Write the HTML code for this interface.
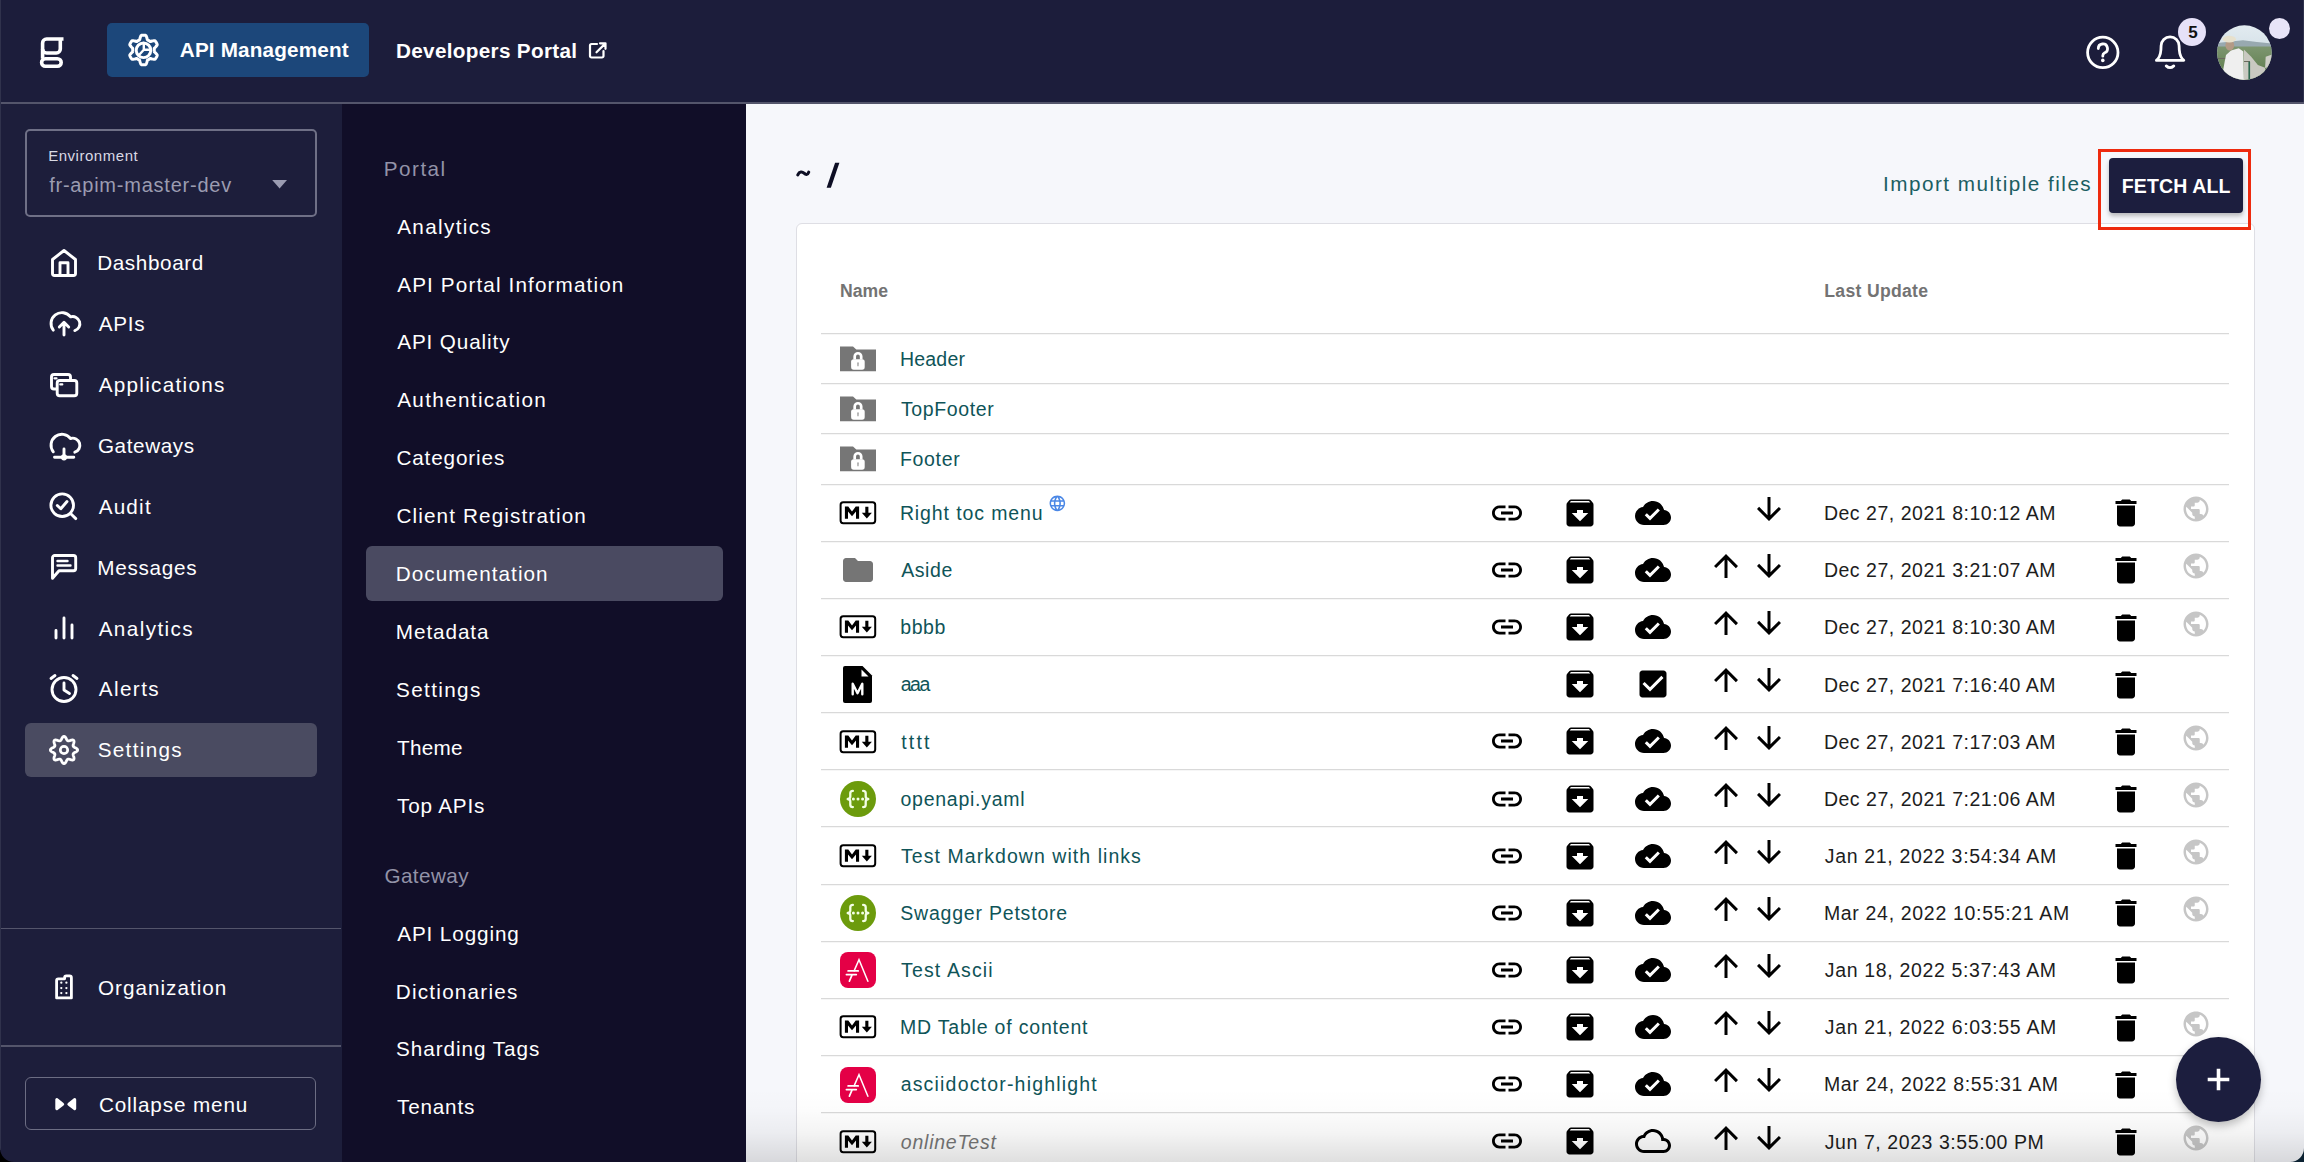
<!DOCTYPE html><html><head><meta charset='utf-8'><style>
html,body{margin:0;padding:0;}
body{width:2304px;height:1162px;overflow:hidden;position:relative;background:#f6f7fb;font-family:"Liberation Sans",sans-serif;}
.t{position:absolute;line-height:1;white-space:pre;font-family:"Liberation Sans",sans-serif;}
.a{position:absolute;}
svg{position:absolute;overflow:visible;}
</style></head><body>
<div class=a style="left:0;top:0;width:2304px;height:102px;background:#1c1d3b"></div>
<div class=a style="left:0;top:102px;width:2304px;height:2px;background:#54556b"></div>
<svg style="left:0;top:0" width="100" height="100" viewBox="0 0 100 100" fill="none" stroke="#fff" stroke-width="3.6" stroke-linejoin="round">
<path d="M63.5 39 H46.6 a4 4 0 0 0 -4 4 V49 a4 4 0 0 0 4 4 H56.3 a4 4 0 0 0 4 -4 V39"/>
<path d="M42.6 49 V58.7"/>
<rect x="41.6" y="58.7" width="19.6" height="7.6" rx="3.8"/>
</svg>
<div class=a style="left:107px;top:23px;width:262px;height:54px;background:#1c477a;border-radius:5px"></div>
<svg style="left:0;top:0" width="200" height="100" viewBox="0 0 200 100" fill="none" stroke="#fff" stroke-width="3" stroke-linejoin="round" stroke-linecap="round">
<path d="M143.50 35.20 L144.02 35.21 L144.53 35.24 L145.05 35.28 L145.56 35.34 L146.02 35.72 L146.38 36.45 L146.68 37.24 L146.93 38.04 L147.13 38.83 L147.30 39.57 L147.55 39.99 L147.89 40.13 L148.23 40.29 L148.57 40.46 L148.90 40.65 L149.22 40.84 L149.54 41.05 L149.85 41.26 L150.15 41.49 L150.63 41.50 L151.36 41.27 L152.14 41.05 L152.96 40.86 L153.79 40.73 L154.61 40.68 L155.16 40.89 L155.47 41.30 L155.77 41.72 L156.05 42.16 L156.32 42.60 L156.57 43.05 L156.80 43.51 L157.02 43.98 L157.22 44.46 L157.13 45.04 L156.67 45.72 L156.15 46.37 L155.57 46.99 L154.99 47.56 L154.43 48.07 L154.19 48.50 L154.24 48.87 L154.27 49.25 L154.29 49.62 L154.30 50.00 L154.29 50.38 L154.27 50.75 L154.24 51.13 L154.19 51.50 L154.43 51.93 L154.99 52.44 L155.57 53.01 L156.15 53.63 L156.67 54.28 L157.13 54.96 L157.22 55.54 L157.02 56.02 L156.80 56.49 L156.57 56.95 L156.32 57.40 L156.05 57.84 L155.77 58.28 L155.47 58.70 L155.16 59.11 L154.61 59.32 L153.79 59.27 L152.96 59.14 L152.14 58.95 L151.36 58.73 L150.63 58.50 L150.15 58.51 L149.85 58.74 L149.54 58.95 L149.22 59.16 L148.90 59.35 L148.57 59.54 L148.23 59.71 L147.89 59.87 L147.55 60.01 L147.30 60.43 L147.13 61.17 L146.93 61.96 L146.68 62.76 L146.38 63.55 L146.02 64.28 L145.56 64.66 L145.05 64.72 L144.53 64.76 L144.02 64.79 L143.50 64.80 L142.98 64.79 L142.47 64.76 L141.95 64.72 L141.44 64.66 L140.98 64.28 L140.62 63.55 L140.32 62.76 L140.07 61.96 L139.87 61.17 L139.70 60.43 L139.45 60.01 L139.11 59.87 L138.77 59.71 L138.43 59.54 L138.10 59.35 L137.78 59.16 L137.46 58.95 L137.15 58.74 L136.85 58.51 L136.37 58.50 L135.64 58.73 L134.86 58.95 L134.04 59.14 L133.21 59.27 L132.39 59.32 L131.84 59.11 L131.53 58.70 L131.23 58.28 L130.95 57.84 L130.68 57.40 L130.43 56.95 L130.20 56.49 L129.98 56.02 L129.78 55.54 L129.87 54.96 L130.33 54.28 L130.85 53.63 L131.43 53.01 L132.01 52.44 L132.57 51.93 L132.81 51.50 L132.76 51.13 L132.73 50.75 L132.71 50.38 L132.70 50.00 L132.71 49.62 L132.73 49.25 L132.76 48.87 L132.81 48.50 L132.57 48.07 L132.01 47.56 L131.43 46.99 L130.85 46.37 L130.33 45.72 L129.87 45.04 L129.78 44.46 L129.98 43.98 L130.20 43.51 L130.43 43.05 L130.68 42.60 L130.95 42.16 L131.23 41.72 L131.53 41.30 L131.84 40.89 L132.39 40.68 L133.21 40.73 L134.04 40.86 L134.86 41.05 L135.64 41.27 L136.37 41.50 L136.85 41.49 L137.15 41.26 L137.46 41.05 L137.78 40.84 L138.10 40.65 L138.43 40.46 L138.77 40.29 L139.11 40.13 L139.45 39.99 L139.70 39.57 L139.87 38.83 L140.07 38.04 L140.32 37.24 L140.62 36.45 L140.98 35.72 L141.44 35.34 L141.95 35.28 L142.47 35.24 L142.98 35.21Z"/>
<circle cx="143.5" cy="50.3" r="7.3" stroke-width="2.9"/>
<path d="M143.8 43 V49.8 H150.6 M143.8 49.8 L139 55" stroke-width="2.4"/>
</svg>
<svg style="left:0;top:0" width="700" height="100" viewBox="0 0 700 100" fill="none" stroke="#fff" stroke-width="2.2" stroke-linecap="round" stroke-linejoin="round">
<path d="M597 44 H591.5 a1.5 1.5 0 0 0 -1.5 1.5 V56 a1.5 1.5 0 0 0 1.5 1.5 H602 a1.5 1.5 0 0 0 1.5 -1.5 V51"/>
<path d="M600 43.3 H605.5 V48.8 M605.2 43.6 L596.5 52.3"/>
</svg>
<svg style="left:2080px;top:30px" width="46" height="46" viewBox="0 0 46 46" fill="none" stroke="#fff" stroke-width="2.8" stroke-linecap="round">
<circle cx="22.8" cy="22.4" r="15.2"/>
<path d="M18.3 18.6 a4.6 4.6 0 1 1 6.4 4.2 c-1.2 0.6 -1.9 1.4 -1.9 2.8 v0.6"/>
<circle cx="22.8" cy="30.4" r="1.8" fill="#fff" stroke="none"/>
</svg>
<svg style="left:2150px;top:30px" width="40" height="46" viewBox="0 0 40 46" fill="none" stroke="#fff" stroke-width="2.8" stroke-linejoin="round" stroke-linecap="round">
<path d="M6.4 30.4 C9.6 27.6 10.6 24 10.9 20 L11.1 15.8 A9 9 0 0 1 29.1 15.8 L29.3 20 C29.6 24 30.6 27.6 33.8 30.4 Z"/>
<path d="M16.2 35.9 Q20 39.4 23.8 35.9"/>
</svg>
<div class=a style="left:2178px;top:17.7px;width:28.4px;height:28.4px;border-radius:50%;background:#e6e1f8"></div>
<svg style="left:2217px;top:24.7px" width="55" height="55" viewBox="0 0 55 55">
<defs><clipPath id="av"><circle cx="27.4" cy="27.6" r="27.3"/></clipPath>
<linearGradient id="sky" x1="0" y1="0" x2="0" y2="1"><stop offset="0" stop-color="#e2ebf0"/><stop offset="1" stop-color="#c6d6df"/></linearGradient>
<linearGradient id="frs" x1="0" y1="0" x2="0" y2="1"><stop offset="0" stop-color="#7d9670"/><stop offset="1" stop-color="#587846"/></linearGradient></defs>
<g clip-path="url(#av)">
<rect width="55" height="55" fill="url(#sky)"/>
<path d="M0 18 L14 16.5 L26 15.2 L40 17 L55 18.5 V23 H0 Z" fill="#98a9b0"/>
<rect x="0" y="21.5" width="55" height="34" fill="url(#frs)"/>
<path d="M26.9 24.4 L34.2 31.7 L40.9 40.1 L48.1 42.8 L48.1 48.4 L37.5 54.6 L26.9 55 Z" fill="#c9c9c1"/>
<path d="M48.7 31.7 L55 29.5 V41 L48.1 43 Z" fill="#cfcfc8"/>
<path d="M1 33.5 H13 M27 36.5 H33" stroke="#6b6a5e" stroke-width="1"/>
<rect x="31.4" y="36.7" width="1.7" height="19" fill="#2d6a50"/>
<path d="M9 30 L14 25.5 L21.8 23.3 L26.3 26.6 L26.9 55 L8.4 55 L6.2 44.5 Z" fill="#efefef"/>
<ellipse cx="12.8" cy="20.2" rx="4.4" ry="5.2" fill="#b39a86"/>
<ellipse cx="12.3" cy="14.2" rx="6.6" ry="3.4" fill="#e7e1cd"/>
</g></svg>
<div class=a style="left:2268.8px;top:18.1px;width:21.4px;height:21.4px;border-radius:50%;background:#e8e4f8"></div>
<div class=a style="left:0;top:104px;width:342px;height:1058px;background:#1d1e3b"></div>
<div class=a style="left:342px;top:104px;width:404px;height:1058px;background:#110e28"></div>
<div class=a style="left:24.5px;top:128.5px;width:288px;height:84px;border:2px solid #6f7086;border-radius:5px"></div>
<svg style="left:0;top:0" width="300" height="200" viewBox="0 0 300 200"><path d="M272.2 180 H287 L279.6 188.4 Z" fill="#9b9cb1"/></svg>
<div class=a style="left:24.5px;top:722.5px;width:292px;height:54.5px;background:#4a4b61;border-radius:6px"></div>
<svg style="left:0;top:0" width="100" height="800" viewBox="0 0 100 800" fill="none" stroke="#fff" stroke-width="2.9" stroke-linecap="round" stroke-linejoin="round">
<!-- home 51-77, 249-277 -->
<path d="M52.5 259.5 L64 250.5 L75.5 259.5 V273.5 a2 2 0 0 1 -2 2 H54.5 a2 2 0 0 1 -2 -2 Z"/>
<path d="M60 275.5 V262.8 H68 V275.5"/>
<!-- cloud upload 48.8-79.2, 310.5-336.3 -->
<path d="M53.3 330.2 A10.6 10.6 0 1 1 70.6 316.9 A6.1 6.1 0 0 1 74.8 330.6"/>
<path d="M64 335 V322.5 M59.3 327 L64 322.3 L68.7 327"/>
<!-- applications 50-78.3, 373-397.2 -->
<path d="M56 389 H54 a2.5 2.5 0 0 1 -2.5 -2.5 V377 a2.5 2.5 0 0 1 2.5 -2.5 H68 a2.5 2.5 0 0 1 2.5 2.5 V380"/>
<rect x="57.2" y="380.5" width="19.6" height="15.2" rx="2.5"/>
<path d="M54.5 378.3 H56.5 M60.3 384.4 H62.3" stroke-width="2.2"/>
<!-- gateways 48.8-79, 432.3-460.8 -->
<path d="M53.3 451.8 A10.6 10.6 0 1 1 70.6 438.5 A6.1 6.1 0 0 1 74.8 452.2"/>
<path d="M64 449 V456 M54.5 457.3 H73.8"/>
<circle cx="64" cy="457.3" r="3.1" fill="#fff" stroke="none"/>
<!-- audit 49.8-77.6 492.2-520 -->
<circle cx="62.2" cy="505.2" r="11.3"/>
<path d="M70.5 513.5 L75.8 518.6"/>
<path d="M57.3 505.5 L60.8 508.8 L67 501.5"/>
<!-- messages 51-77.2, 553.9-579.8 -->
<path d="M55 555.5 H73.5 a2.2 2.2 0 0 1 2.2 2.2 V568.5 a2.2 2.2 0 0 1 -2.2 2.2 H59 L52.5 578.3 V557.7 a2.2 2.2 0 0 1 2.5 -2.2 Z"/>
<path d="M57.5 561 H67.5 M57.5 565.5 H70.5" stroke-width="2.4"/>
<!-- analytics 54.4-73.4 616.5-639.6 -->
<path d="M56 638 V630.5 M64 638 V618 M72 638 V625"/>
<!-- alerts 49.2-78.8 674.3-702.9 -->
<circle cx="64" cy="689.5" r="12"/>
<path d="M64 683 V690 L69.5 693.5"/>
<path d="M51 678.5 L55 675.5 M77 678.5 L73 675.5"/>
</svg>
<svg style="left:0;top:0" width="100" height="800" viewBox="0 0 100 800" fill="none" stroke="#fff" stroke-width="2.9" stroke-linecap="round" stroke-linejoin="round">
<path d="M64.00 736.40 L64.35 736.45 L64.70 736.60 L65.03 736.85 L65.35 737.17 L65.64 737.56 L65.90 737.99 L66.14 738.43 L66.36 738.88 L66.57 739.30 L66.76 739.68 L66.96 740.01 L67.16 740.29 L67.37 740.50 L67.59 740.65 L67.83 740.76 L68.07 740.85 L68.34 740.90 L68.64 740.90 L68.97 740.85 L69.34 740.75 L69.75 740.62 L70.19 740.46 L70.66 740.30 L71.15 740.16 L71.64 740.04 L72.12 739.98 L72.57 739.97 L72.98 740.03 L73.33 740.17 L73.62 740.38 L73.83 740.67 L73.97 741.02 L74.03 741.43 L74.02 741.88 L73.96 742.36 L73.84 742.85 L73.70 743.34 L73.54 743.81 L73.38 744.25 L73.25 744.66 L73.15 745.03 L73.10 745.36 L73.10 745.66 L73.15 745.93 L73.24 746.17 L73.35 746.41 L73.50 746.63 L73.71 746.84 L73.99 747.04 L74.32 747.24 L74.70 747.43 L75.12 747.64 L75.57 747.86 L76.01 748.10 L76.44 748.36 L76.83 748.65 L77.15 748.97 L77.40 749.30 L77.55 749.65 L77.60 750.00 L77.55 750.35 L77.40 750.70 L77.15 751.03 L76.83 751.35 L76.44 751.64 L76.01 751.90 L75.57 752.14 L75.12 752.36 L74.70 752.57 L74.32 752.76 L73.99 752.96 L73.71 753.16 L73.50 753.37 L73.35 753.59 L73.24 753.83 L73.15 754.07 L73.10 754.34 L73.10 754.64 L73.15 754.97 L73.25 755.34 L73.38 755.75 L73.54 756.19 L73.70 756.66 L73.84 757.15 L73.96 757.64 L74.02 758.12 L74.03 758.57 L73.97 758.98 L73.83 759.33 L73.62 759.62 L73.33 759.83 L72.98 759.97 L72.57 760.03 L72.12 760.02 L71.64 759.96 L71.15 759.84 L70.66 759.70 L70.19 759.54 L69.75 759.38 L69.34 759.25 L68.97 759.15 L68.64 759.10 L68.34 759.10 L68.07 759.15 L67.83 759.24 L67.59 759.35 L67.37 759.50 L67.16 759.71 L66.96 759.99 L66.76 760.32 L66.57 760.70 L66.36 761.12 L66.14 761.57 L65.90 762.01 L65.64 762.44 L65.35 762.83 L65.03 763.15 L64.70 763.40 L64.35 763.55 L64.00 763.60 L63.65 763.55 L63.30 763.40 L62.97 763.15 L62.65 762.83 L62.36 762.44 L62.10 762.01 L61.86 761.57 L61.64 761.12 L61.43 760.70 L61.24 760.32 L61.04 759.99 L60.84 759.71 L60.63 759.50 L60.41 759.35 L60.17 759.24 L59.93 759.15 L59.66 759.10 L59.36 759.10 L59.03 759.15 L58.66 759.25 L58.25 759.38 L57.81 759.54 L57.34 759.70 L56.85 759.84 L56.36 759.96 L55.88 760.02 L55.43 760.03 L55.02 759.97 L54.67 759.83 L54.38 759.62 L54.17 759.33 L54.03 758.98 L53.97 758.57 L53.98 758.12 L54.04 757.64 L54.16 757.15 L54.30 756.66 L54.46 756.19 L54.62 755.75 L54.75 755.34 L54.85 754.97 L54.90 754.64 L54.90 754.34 L54.85 754.07 L54.76 753.83 L54.65 753.59 L54.50 753.37 L54.29 753.16 L54.01 752.96 L53.68 752.76 L53.30 752.57 L52.88 752.36 L52.43 752.14 L51.99 751.90 L51.56 751.64 L51.17 751.35 L50.85 751.03 L50.60 750.70 L50.45 750.35 L50.40 750.00 L50.45 749.65 L50.60 749.30 L50.85 748.97 L51.17 748.65 L51.56 748.36 L51.99 748.10 L52.43 747.86 L52.88 747.64 L53.30 747.43 L53.68 747.24 L54.01 747.04 L54.29 746.84 L54.50 746.63 L54.65 746.41 L54.76 746.17 L54.85 745.93 L54.90 745.66 L54.90 745.36 L54.85 745.03 L54.75 744.66 L54.62 744.25 L54.46 743.81 L54.30 743.34 L54.16 742.85 L54.04 742.36 L53.98 741.88 L53.97 741.43 L54.03 741.02 L54.17 740.67 L54.38 740.38 L54.67 740.17 L55.02 740.03 L55.43 739.97 L55.88 739.98 L56.36 740.04 L56.85 740.16 L57.34 740.30 L57.81 740.46 L58.25 740.62 L58.66 740.75 L59.03 740.85 L59.36 740.90 L59.66 740.90 L59.93 740.85 L60.17 740.76 L60.41 740.65 L60.63 740.50 L60.84 740.29 L61.04 740.01 L61.24 739.68 L61.43 739.30 L61.64 738.88 L61.86 738.43 L62.10 737.99 L62.36 737.56 L62.65 737.17 L62.97 736.85 L63.30 736.60 L63.65 736.45Z" stroke-width="2.8"/>
<circle cx="64" cy="750" r="3.7" stroke-width="2.7"/>
</svg>
<div class=a style="left:0;top:927.5px;width:341px;height:1.5px;background:#54556b"></div>
<div class=a style="left:0;top:1045px;width:341px;height:1.5px;background:#54556b"></div>
<svg style="left:0;top:900px" width="100" height="260" viewBox="0 900 100 260" fill="none" stroke="#fff" stroke-width="2.8" stroke-linejoin="round">
<path d="M56.6 997.9 V980.6 a1.8 1.8 0 0 1 1.8 -1.8 H64.6 V977.7 a1.8 1.8 0 0 1 1.8 -1.8 H69.6 a1.8 1.8 0 0 1 1.8 1.8 V997.9 Z"/>
<g fill="#fff" stroke="none"><circle cx="61.3" cy="982.7" r="1.15"/><circle cx="66.4" cy="982.7" r="1.15"/><circle cx="61.3" cy="988.1" r="1.15"/><circle cx="66.4" cy="988.1" r="1.15"/><circle cx="61.3" cy="993.1" r="1.15"/><circle cx="66.4" cy="993.1" r="1.15"/></g>
</svg>
<div class=a style="left:24.5px;top:1077px;width:289px;height:51px;border:1.8px solid #6c6d83;border-radius:6px"></div>
<svg style="left:0;top:1090px" width="100" height="30" viewBox="0 1090 100 30"><path d="M55.3 1099.5 a1.5 1.5 0 0 1 2.3 -1.2 L63.5 1103 a1.5 1.5 0 0 1 0 2.4 L57.6 1110 a1.5 1.5 0 0 1 -2.3 -1.2 Z M76.2 1099.5 a1.5 1.5 0 0 0 -2.3 -1.2 L68 1103 a1.5 1.5 0 0 0 0 2.4 L73.9 1110 a1.5 1.5 0 0 0 2.3 -1.2 Z" fill="#fff"/></svg>
<div class=a style="left:365.5px;top:546px;width:357px;height:55px;background:#4a4a61;border-radius:6px"></div>
<svg style="left:780px;top:150px" width="80" height="50" viewBox="780 150 80 50"><path d="M826.6 187.8 H830.9 L839.4 162.8 H835.1 Z" fill="#0d0e24"/><path d="M797.8 174.8 C799.5 171.2 802.3 171.6 804 173.2 C805.7 174.8 807.6 175.2 808.7 172.2" fill="none" stroke="#0d0e24" stroke-width="3.1" stroke-linecap="round"/></svg>
<div class=a style="left:2109px;top:158px;width:134px;height:55px;background:#1c1e3e;border-radius:4px;box-shadow:0 3px 4px rgba(0,0,0,0.25)"></div>
<div class=a style="left:796px;top:223px;width:1457px;height:1000px;background:#fff;border:1.5px solid #dedee4;border-radius:6px"></div>
<div class=a style="left:821px;top:333px;width:1408px;height:1px;background:#d9d9d9;box-shadow:0 1px 0 rgba(0,0,0,0.035)"></div>
<div class=a style="left:821px;top:383px;width:1408px;height:1px;background:#d9d9d9;box-shadow:0 1px 0 rgba(0,0,0,0.035)"></div>
<div class=a style="left:821px;top:433px;width:1408px;height:1px;background:#d9d9d9;box-shadow:0 1px 0 rgba(0,0,0,0.035)"></div>
<div class=a style="left:821px;top:484px;width:1408px;height:1px;background:#d9d9d9;box-shadow:0 1px 0 rgba(0,0,0,0.035)"></div>
<div class=a style="left:821px;top:541px;width:1408px;height:1px;background:#d9d9d9;box-shadow:0 1px 0 rgba(0,0,0,0.035)"></div>
<div class=a style="left:821px;top:598px;width:1408px;height:1px;background:#d9d9d9;box-shadow:0 1px 0 rgba(0,0,0,0.035)"></div>
<div class=a style="left:821px;top:655px;width:1408px;height:1px;background:#d9d9d9;box-shadow:0 1px 0 rgba(0,0,0,0.035)"></div>
<div class=a style="left:821px;top:712px;width:1408px;height:1px;background:#d9d9d9;box-shadow:0 1px 0 rgba(0,0,0,0.035)"></div>
<div class=a style="left:821px;top:769px;width:1408px;height:1px;background:#d9d9d9;box-shadow:0 1px 0 rgba(0,0,0,0.035)"></div>
<div class=a style="left:821px;top:826px;width:1408px;height:1px;background:#d9d9d9;box-shadow:0 1px 0 rgba(0,0,0,0.035)"></div>
<div class=a style="left:821px;top:884px;width:1408px;height:1px;background:#d9d9d9;box-shadow:0 1px 0 rgba(0,0,0,0.035)"></div>
<div class=a style="left:821px;top:941px;width:1408px;height:1px;background:#d9d9d9;box-shadow:0 1px 0 rgba(0,0,0,0.035)"></div>
<div class=a style="left:821px;top:998px;width:1408px;height:1px;background:#d9d9d9;box-shadow:0 1px 0 rgba(0,0,0,0.035)"></div>
<div class=a style="left:821px;top:1055px;width:1408px;height:1px;background:#d9d9d9;box-shadow:0 1px 0 rgba(0,0,0,0.035)"></div>
<div class=a style="left:821px;top:1112px;width:1408px;height:1px;background:#d9d9d9;box-shadow:0 1px 0 rgba(0,0,0,0.035)"></div>
<svg style="left:839.90px;top:345.60px" width="36" height="26" viewBox="0 0 36 26">
<path d="M0 0.5 H13 L16.3 3.5 H36 V25.2 H0 Z" fill="#767676"/>
<path d="M14.7 13.5 V10.5 a3.25 3.25 0 0 1 6.5 0 V13.5" fill="none" stroke="#fff" stroke-width="2.7"/>
<rect x="11.1" y="13.2" width="13.6" height="10.5" rx="2.6" fill="#fff"/>
<path d="M17.4 16.6 H18.6 L18.4 20.3 H17.6 Z" fill="#767676"/>
</svg>
<svg style="left:839.90px;top:395.70px" width="36" height="26" viewBox="0 0 36 26">
<path d="M0 0.5 H13 L16.3 3.5 H36 V25.2 H0 Z" fill="#767676"/>
<path d="M14.7 13.5 V10.5 a3.25 3.25 0 0 1 6.5 0 V13.5" fill="none" stroke="#fff" stroke-width="2.7"/>
<rect x="11.1" y="13.2" width="13.6" height="10.5" rx="2.6" fill="#fff"/>
<path d="M17.4 16.6 H18.6 L18.4 20.3 H17.6 Z" fill="#767676"/>
</svg>
<svg style="left:839.90px;top:445.90px" width="36" height="26" viewBox="0 0 36 26">
<path d="M0 0.5 H13 L16.3 3.5 H36 V25.2 H0 Z" fill="#767676"/>
<path d="M14.7 13.5 V10.5 a3.25 3.25 0 0 1 6.5 0 V13.5" fill="none" stroke="#fff" stroke-width="2.7"/>
<rect x="11.1" y="13.2" width="13.6" height="10.5" rx="2.6" fill="#fff"/>
<path d="M17.4 16.6 H18.6 L18.4 20.3 H17.6 Z" fill="#767676"/>
</svg>
<svg style="left:840.00px;top:501.05px" width="36" height="23" viewBox="0 0 36 23">
<rect x="0.6" y="1.15" width="34.6" height="21" rx="2.6" fill="none" stroke="#000" stroke-width="2"/>
<path d="M4.9 17.7 V5.6 H8.3 L12 10.6 L15.7 5.6 H19.1 V17.7 H16 V10.4 L12 15.3 L8 10.4 V17.7 Z" fill="#000"/>
<path d="M25.3 5.7 H28.4 V11.8 H31.9 L26.85 17.6 L21.8 11.8 H25.3 Z" fill="#000"/>
</svg>
<svg style="left:1048.24px;top:493.64px" width="18.72" height="18.72" viewBox="0 0 24 24"><path d="M11.99 2C6.47 2 2 6.48 2 12s4.47 10 9.99 10C17.52 22 22 17.52 22 12S17.52 2 11.99 2zm6.93 6h-2.95c-.32-1.25-.78-2.45-1.38-3.56 1.84.63 3.37 1.91 4.33 3.56zM12 4.04c.83 1.2 1.48 2.53 1.91 3.96h-3.82c.43-1.43 1.08-2.76 1.91-3.96zM4.26 14C4.1 13.36 4 12.69 4 12s.1-1.36.26-2h3.38c-.08.66-.14 1.32-.14 2 0 .68.06 1.34.14 2H4.26zm.82 2h2.95c.32 1.25.78 2.45 1.38 3.56-1.84-.63-3.37-1.9-4.33-3.56zm2.95-8H5.08c.96-1.66 2.49-2.93 4.33-3.56C8.81 5.55 8.35 6.75 8.03 8zM12 19.96c-.83-1.2-1.48-2.53-1.91-3.96h3.82c-.43 1.43-1.08 2.76-1.91 3.96zM14.34 14H9.66c-.09-.66-.16-1.32-.16-2 0-.68.07-1.35.16-2h4.68c.09.65.16 1.32.16 2 0 .68-.07 1.34-.16 2zm.25 5.56c.6-1.11 1.06-2.31 1.38-3.56h2.95c-.96 1.65-2.49 2.93-4.33 3.56zM16.36 14c.08-.66.14-1.32.14-2 0-.68-.06-1.34-.14-2h3.38c.16.64.26 1.31.26 2s-.1 1.36-.26 2h-3.38z" fill="#4a87e6"/></svg>
<svg style="left:1489.00px;top:494.90px" width="36.00" height="36.00" viewBox="0 0 24 24"><path d="M3.9 12c0-1.71 1.39-3.1 3.1-3.1h4V7H7c-2.76 0-5 2.24-5 5s2.24 5 5 5h4v-1.9H7c-1.71 0-3.1-1.39-3.1-3.1zM8 13h8v-2H8v2zm9-6h-4v1.9h4c1.71 0 3.1 1.39 3.1 3.1s-1.39 3.1-3.1 3.1h-4V17h4c2.76 0 5-2.24 5-5s-2.24-5-5-5z" fill="#000"/></svg>
<svg style="left:1562.00px;top:494.90px" width="36.00" height="36.00" viewBox="0 0 24 24"><path d="M20.54 5.23l-1.39-1.68C18.88 3.21 18.47 3 18 3H6c-.47 0-.88.21-1.16.55L3.46 5.23C3.17 5.57 3 6.02 3 6.5V19c0 1.1.9 2 2 2h14c1.1 0 2-.9 2-2V6.5c0-.48-.17-.93-.46-1.27zM12 17.5L6.5 12H10v-2h4v2h3.5L12 17.5zM5.12 5l.81-1h12l.94 1H5.12z" fill="#000"/></svg>
<svg style="left:1635.30px;top:494.90px" width="36.00" height="36.00" viewBox="0 0 24 24"><path d="M19.35 10.04C18.67 6.59 15.64 4 12 4 9.11 4 6.6 5.64 5.35 8.04 2.34 8.36 0 10.91 0 14c0 3.31 2.69 6 6 6h13c2.76 0 5-2.24 5-5 0-2.64-2.05-4.78-4.65-4.96zM10 17l-3.5-3.5 1.41-1.41L10 14.17 15.18 9l1.41 1.41L10 17z" fill="#000"/></svg>
<svg style="left:1751.30px;top:491.00px" width="36.00" height="36.00" viewBox="0 0 24 24"><path d="M20 12l-1.41-1.41L13 16.17V4h-2v12.17l-5.58-5.59L4 12l8 8 8-8z" fill="#000"/></svg>
<svg style="left:2107.80px;top:495.30px" width="36.00" height="36.00" viewBox="0 0 24 24"><path d="M6 19c0 1.1.9 2 2 2h8c1.1 0 2-.9 2-2V7H6v12zM19 4h-3.5l-1-1h-5l-1 1H5v2h14V4z" fill="#000"/></svg>
<svg style="left:2180.50px;top:494.30px" width="30.00" height="30.00" viewBox="0 0 24 24"><path d="M12 2C6.48 2 2 6.48 2 12s4.48 10 10 10 10-4.48 10-10S17.52 2 12 2zm-1 17.93c-3.95-.49-7-3.85-7-7.93 0-.62.08-1.21.21-1.79L9 15v1c0 1.1.9 2 2 2v1.93zm6.9-2.54c-.26-.81-1-1.39-1.9-1.39h-1v-3c0-.55-.45-1-1-1H8v-2h2c.55 0 1-.45 1-1V7h2c1.1 0 2-.9 2-2v-.41c2.93 1.19 5 4.06 5 7.41 0 2.08-.8 3.97-2.1 5.39z" fill="#c6c6c6"/></svg>
<svg style="left:840.00px;top:551.94px" width="36.00" height="36.00" viewBox="0 0 24 24"><path d="M10 4H4c-1.1 0-1.99.9-1.99 2L2 18c0 1.1.9 2 2 2h16c1.1 0 2-.9 2-2V8c0-1.1-.9-2-2-2h-8l-2-2z" fill="#757575"/></svg>
<svg style="left:1489.00px;top:552.04px" width="36.00" height="36.00" viewBox="0 0 24 24"><path d="M3.9 12c0-1.71 1.39-3.1 3.1-3.1h4V7H7c-2.76 0-5 2.24-5 5s2.24 5 5 5h4v-1.9H7c-1.71 0-3.1-1.39-3.1-3.1zM8 13h8v-2H8v2zm9-6h-4v1.9h4c1.71 0 3.1 1.39 3.1 3.1s-1.39 3.1-3.1 3.1h-4V17h4c2.76 0 5-2.24 5-5s-2.24-5-5-5z" fill="#000"/></svg>
<svg style="left:1562.00px;top:552.04px" width="36.00" height="36.00" viewBox="0 0 24 24"><path d="M20.54 5.23l-1.39-1.68C18.88 3.21 18.47 3 18 3H6c-.47 0-.88.21-1.16.55L3.46 5.23C3.17 5.57 3 6.02 3 6.5V19c0 1.1.9 2 2 2h14c1.1 0 2-.9 2-2V6.5c0-.48-.17-.93-.46-1.27zM12 17.5L6.5 12H10v-2h4v2h3.5L12 17.5zM5.12 5l.81-1h12l.94 1H5.12z" fill="#000"/></svg>
<svg style="left:1635.30px;top:552.04px" width="36.00" height="36.00" viewBox="0 0 24 24"><path d="M19.35 10.04C18.67 6.59 15.64 4 12 4 9.11 4 6.6 5.64 5.35 8.04 2.34 8.36 0 10.91 0 14c0 3.31 2.69 6 6 6h13c2.76 0 5-2.24 5-5 0-2.64-2.05-4.78-4.65-4.96zM10 17l-3.5-3.5 1.41-1.41L10 14.17 15.18 9l1.41 1.41L10 17z" fill="#000"/></svg>
<svg style="left:1708.40px;top:548.14px" width="36.00" height="36.00" viewBox="0 0 24 24"><path d="M4 12l1.41 1.41L11 7.83V20h2V7.83l5.58 5.59L20 12l-8-8-8 8z" fill="#000"/></svg>
<svg style="left:1751.30px;top:548.14px" width="36.00" height="36.00" viewBox="0 0 24 24"><path d="M20 12l-1.41-1.41L13 16.17V4h-2v12.17l-5.58-5.59L4 12l8 8 8-8z" fill="#000"/></svg>
<svg style="left:2107.80px;top:552.44px" width="36.00" height="36.00" viewBox="0 0 24 24"><path d="M6 19c0 1.1.9 2 2 2h8c1.1 0 2-.9 2-2V7H6v12zM19 4h-3.5l-1-1h-5l-1 1H5v2h14V4z" fill="#000"/></svg>
<svg style="left:2180.50px;top:551.44px" width="30.00" height="30.00" viewBox="0 0 24 24"><path d="M12 2C6.48 2 2 6.48 2 12s4.48 10 10 10 10-4.48 10-10S17.52 2 12 2zm-1 17.93c-3.95-.49-7-3.85-7-7.93 0-.62.08-1.21.21-1.79L9 15v1c0 1.1.9 2 2 2v1.93zm6.9-2.54c-.26-.81-1-1.39-1.9-1.39h-1v-3c0-.55-.45-1-1-1H8v-2h2c.55 0 1-.45 1-1V7h2c1.1 0 2-.9 2-2v-.41c2.93 1.19 5 4.06 5 7.41 0 2.08-.8 3.97-2.1 5.39z" fill="#c6c6c6"/></svg>
<svg style="left:840.00px;top:615.33px" width="36" height="23" viewBox="0 0 36 23">
<rect x="0.6" y="1.15" width="34.6" height="21" rx="2.6" fill="none" stroke="#000" stroke-width="2"/>
<path d="M4.9 17.7 V5.6 H8.3 L12 10.6 L15.7 5.6 H19.1 V17.7 H16 V10.4 L12 15.3 L8 10.4 V17.7 Z" fill="#000"/>
<path d="M25.3 5.7 H28.4 V11.8 H31.9 L26.85 17.6 L21.8 11.8 H25.3 Z" fill="#000"/>
</svg>
<svg style="left:1489.00px;top:609.18px" width="36.00" height="36.00" viewBox="0 0 24 24"><path d="M3.9 12c0-1.71 1.39-3.1 3.1-3.1h4V7H7c-2.76 0-5 2.24-5 5s2.24 5 5 5h4v-1.9H7c-1.71 0-3.1-1.39-3.1-3.1zM8 13h8v-2H8v2zm9-6h-4v1.9h4c1.71 0 3.1 1.39 3.1 3.1s-1.39 3.1-3.1 3.1h-4V17h4c2.76 0 5-2.24 5-5s-2.24-5-5-5z" fill="#000"/></svg>
<svg style="left:1562.00px;top:609.18px" width="36.00" height="36.00" viewBox="0 0 24 24"><path d="M20.54 5.23l-1.39-1.68C18.88 3.21 18.47 3 18 3H6c-.47 0-.88.21-1.16.55L3.46 5.23C3.17 5.57 3 6.02 3 6.5V19c0 1.1.9 2 2 2h14c1.1 0 2-.9 2-2V6.5c0-.48-.17-.93-.46-1.27zM12 17.5L6.5 12H10v-2h4v2h3.5L12 17.5zM5.12 5l.81-1h12l.94 1H5.12z" fill="#000"/></svg>
<svg style="left:1635.30px;top:609.18px" width="36.00" height="36.00" viewBox="0 0 24 24"><path d="M19.35 10.04C18.67 6.59 15.64 4 12 4 9.11 4 6.6 5.64 5.35 8.04 2.34 8.36 0 10.91 0 14c0 3.31 2.69 6 6 6h13c2.76 0 5-2.24 5-5 0-2.64-2.05-4.78-4.65-4.96zM10 17l-3.5-3.5 1.41-1.41L10 14.17 15.18 9l1.41 1.41L10 17z" fill="#000"/></svg>
<svg style="left:1708.40px;top:605.28px" width="36.00" height="36.00" viewBox="0 0 24 24"><path d="M4 12l1.41 1.41L11 7.83V20h2V7.83l5.58 5.59L20 12l-8-8-8 8z" fill="#000"/></svg>
<svg style="left:1751.30px;top:605.28px" width="36.00" height="36.00" viewBox="0 0 24 24"><path d="M20 12l-1.41-1.41L13 16.17V4h-2v12.17l-5.58-5.59L4 12l8 8 8-8z" fill="#000"/></svg>
<svg style="left:2107.80px;top:609.58px" width="36.00" height="36.00" viewBox="0 0 24 24"><path d="M6 19c0 1.1.9 2 2 2h8c1.1 0 2-.9 2-2V7H6v12zM19 4h-3.5l-1-1h-5l-1 1H5v2h14V4z" fill="#000"/></svg>
<svg style="left:2180.50px;top:608.58px" width="30.00" height="30.00" viewBox="0 0 24 24"><path d="M12 2C6.48 2 2 6.48 2 12s4.48 10 10 10 10-4.48 10-10S17.52 2 12 2zm-1 17.93c-3.95-.49-7-3.85-7-7.93 0-.62.08-1.21.21-1.79L9 15v1c0 1.1.9 2 2 2v1.93zm6.9-2.54c-.26-.81-1-1.39-1.9-1.39h-1v-3c0-.55-.45-1-1-1H8v-2h2c.55 0 1-.45 1-1V7h2c1.1 0 2-.9 2-2v-.41c2.93 1.19 5 4.06 5 7.41 0 2.08-.8 3.97-2.1 5.39z" fill="#c6c6c6"/></svg>
<svg style="left:843.30px;top:666.02px" width="29" height="37" viewBox="0 0 29 37">
<path d="M2 0 H19.5 L29 9.5 V35 a2 2 0 0 1 -2 2 H2 a2 2 0 0 1 -2 -2 V2 a2 2 0 0 1 2 -2 Z" fill="#000"/>
<path d="M18.5 3.5 V10.5 H25.5 Z" fill="#fff"/>
<path d="M9.7 28.2 V17.8 L14.5 27.2 L19.3 17.8 V28.2" fill="none" stroke="#fff" stroke-width="2.4" stroke-linejoin="round" stroke-linecap="round"/>
</svg>
<svg style="left:1562.00px;top:666.32px" width="36.00" height="36.00" viewBox="0 0 24 24"><path d="M20.54 5.23l-1.39-1.68C18.88 3.21 18.47 3 18 3H6c-.47 0-.88.21-1.16.55L3.46 5.23C3.17 5.57 3 6.02 3 6.5V19c0 1.1.9 2 2 2h14c1.1 0 2-.9 2-2V6.5c0-.48-.17-.93-.46-1.27zM12 17.5L6.5 12H10v-2h4v2h3.5L12 17.5zM5.12 5l.81-1h12l.94 1H5.12z" fill="#000"/></svg>
<svg style="left:1635.30px;top:666.32px" width="36.00" height="36.00" viewBox="0 0 24 24"><path d="M19 3H5c-1.11 0-2 .9-2 2v14c0 1.1.89 2 2 2h14c1.11 0 2-.9 2-2V5c0-1.1-.89-2-2-2zm-9 14l-5-5 1.41-1.41L10 14.17l7.59-7.59L19 8l-9 9z" fill="#000"/></svg>
<svg style="left:1708.40px;top:662.42px" width="36.00" height="36.00" viewBox="0 0 24 24"><path d="M4 12l1.41 1.41L11 7.83V20h2V7.83l5.58 5.59L20 12l-8-8-8 8z" fill="#000"/></svg>
<svg style="left:1751.30px;top:662.42px" width="36.00" height="36.00" viewBox="0 0 24 24"><path d="M20 12l-1.41-1.41L13 16.17V4h-2v12.17l-5.58-5.59L4 12l8 8 8-8z" fill="#000"/></svg>
<svg style="left:2107.80px;top:666.72px" width="36.00" height="36.00" viewBox="0 0 24 24"><path d="M6 19c0 1.1.9 2 2 2h8c1.1 0 2-.9 2-2V7H6v12zM19 4h-3.5l-1-1h-5l-1 1H5v2h14V4z" fill="#000"/></svg>
<svg style="left:840.00px;top:729.61px" width="36" height="23" viewBox="0 0 36 23">
<rect x="0.6" y="1.15" width="34.6" height="21" rx="2.6" fill="none" stroke="#000" stroke-width="2"/>
<path d="M4.9 17.7 V5.6 H8.3 L12 10.6 L15.7 5.6 H19.1 V17.7 H16 V10.4 L12 15.3 L8 10.4 V17.7 Z" fill="#000"/>
<path d="M25.3 5.7 H28.4 V11.8 H31.9 L26.85 17.6 L21.8 11.8 H25.3 Z" fill="#000"/>
</svg>
<svg style="left:1489.00px;top:723.46px" width="36.00" height="36.00" viewBox="0 0 24 24"><path d="M3.9 12c0-1.71 1.39-3.1 3.1-3.1h4V7H7c-2.76 0-5 2.24-5 5s2.24 5 5 5h4v-1.9H7c-1.71 0-3.1-1.39-3.1-3.1zM8 13h8v-2H8v2zm9-6h-4v1.9h4c1.71 0 3.1 1.39 3.1 3.1s-1.39 3.1-3.1 3.1h-4V17h4c2.76 0 5-2.24 5-5s-2.24-5-5-5z" fill="#000"/></svg>
<svg style="left:1562.00px;top:723.46px" width="36.00" height="36.00" viewBox="0 0 24 24"><path d="M20.54 5.23l-1.39-1.68C18.88 3.21 18.47 3 18 3H6c-.47 0-.88.21-1.16.55L3.46 5.23C3.17 5.57 3 6.02 3 6.5V19c0 1.1.9 2 2 2h14c1.1 0 2-.9 2-2V6.5c0-.48-.17-.93-.46-1.27zM12 17.5L6.5 12H10v-2h4v2h3.5L12 17.5zM5.12 5l.81-1h12l.94 1H5.12z" fill="#000"/></svg>
<svg style="left:1635.30px;top:723.46px" width="36.00" height="36.00" viewBox="0 0 24 24"><path d="M19.35 10.04C18.67 6.59 15.64 4 12 4 9.11 4 6.6 5.64 5.35 8.04 2.34 8.36 0 10.91 0 14c0 3.31 2.69 6 6 6h13c2.76 0 5-2.24 5-5 0-2.64-2.05-4.78-4.65-4.96zM10 17l-3.5-3.5 1.41-1.41L10 14.17 15.18 9l1.41 1.41L10 17z" fill="#000"/></svg>
<svg style="left:1708.40px;top:719.56px" width="36.00" height="36.00" viewBox="0 0 24 24"><path d="M4 12l1.41 1.41L11 7.83V20h2V7.83l5.58 5.59L20 12l-8-8-8 8z" fill="#000"/></svg>
<svg style="left:1751.30px;top:719.56px" width="36.00" height="36.00" viewBox="0 0 24 24"><path d="M20 12l-1.41-1.41L13 16.17V4h-2v12.17l-5.58-5.59L4 12l8 8 8-8z" fill="#000"/></svg>
<svg style="left:2107.80px;top:723.86px" width="36.00" height="36.00" viewBox="0 0 24 24"><path d="M6 19c0 1.1.9 2 2 2h8c1.1 0 2-.9 2-2V7H6v12zM19 4h-3.5l-1-1h-5l-1 1H5v2h14V4z" fill="#000"/></svg>
<svg style="left:2180.50px;top:722.86px" width="30.00" height="30.00" viewBox="0 0 24 24"><path d="M12 2C6.48 2 2 6.48 2 12s4.48 10 10 10 10-4.48 10-10S17.52 2 12 2zm-1 17.93c-3.95-.49-7-3.85-7-7.93 0-.62.08-1.21.21-1.79L9 15v1c0 1.1.9 2 2 2v1.93zm6.9-2.54c-.26-.81-1-1.39-1.9-1.39h-1v-3c0-.55-.45-1-1-1H8v-2h2c.55 0 1-.45 1-1V7h2c1.1 0 2-.9 2-2v-.41c2.93 1.19 5 4.06 5 7.41 0 2.08-.8 3.97-2.1 5.39z" fill="#c6c6c6"/></svg>
<svg style="left:840.00px;top:780.60px" width="36" height="36" viewBox="0 0 36 36">
<circle cx="18" cy="18" r="18" fill="#6c9b0c"/>
<g fill="none" stroke="#f4ffe6" stroke-width="2.3" stroke-linecap="round" stroke-linejoin="round">
<path d="M12.9 9.9 c-1.6 0 -2.6 0.6 -2.6 2.4 v3.2 c0 1.4 -0.9 2.3 -2.6 2.5 c1.7 0.2 2.6 1.1 2.6 2.5 v3.2 c0 1.8 1 2.4 2.6 2.4"/>
<path d="M23.1 9.9 c1.6 0 2.6 0.6 2.6 2.4 v3.2 c0 1.4 0.9 2.3 2.6 2.5 c-1.7 0.2 -2.6 1.1 -2.6 2.5 v3.2 c0 1.8 -1 2.4 -2.6 2.4"/>
</g>
<g fill="#f4ffe6"><circle cx="13.4" cy="18" r="1.5"/><circle cx="18" cy="18" r="1.5"/><circle cx="22.6" cy="18" r="1.5"/></g>
</svg>
<svg style="left:1489.00px;top:780.60px" width="36.00" height="36.00" viewBox="0 0 24 24"><path d="M3.9 12c0-1.71 1.39-3.1 3.1-3.1h4V7H7c-2.76 0-5 2.24-5 5s2.24 5 5 5h4v-1.9H7c-1.71 0-3.1-1.39-3.1-3.1zM8 13h8v-2H8v2zm9-6h-4v1.9h4c1.71 0 3.1 1.39 3.1 3.1s-1.39 3.1-3.1 3.1h-4V17h4c2.76 0 5-2.24 5-5s-2.24-5-5-5z" fill="#000"/></svg>
<svg style="left:1562.00px;top:780.60px" width="36.00" height="36.00" viewBox="0 0 24 24"><path d="M20.54 5.23l-1.39-1.68C18.88 3.21 18.47 3 18 3H6c-.47 0-.88.21-1.16.55L3.46 5.23C3.17 5.57 3 6.02 3 6.5V19c0 1.1.9 2 2 2h14c1.1 0 2-.9 2-2V6.5c0-.48-.17-.93-.46-1.27zM12 17.5L6.5 12H10v-2h4v2h3.5L12 17.5zM5.12 5l.81-1h12l.94 1H5.12z" fill="#000"/></svg>
<svg style="left:1635.30px;top:780.60px" width="36.00" height="36.00" viewBox="0 0 24 24"><path d="M19.35 10.04C18.67 6.59 15.64 4 12 4 9.11 4 6.6 5.64 5.35 8.04 2.34 8.36 0 10.91 0 14c0 3.31 2.69 6 6 6h13c2.76 0 5-2.24 5-5 0-2.64-2.05-4.78-4.65-4.96zM10 17l-3.5-3.5 1.41-1.41L10 14.17 15.18 9l1.41 1.41L10 17z" fill="#000"/></svg>
<svg style="left:1708.40px;top:776.70px" width="36.00" height="36.00" viewBox="0 0 24 24"><path d="M4 12l1.41 1.41L11 7.83V20h2V7.83l5.58 5.59L20 12l-8-8-8 8z" fill="#000"/></svg>
<svg style="left:1751.30px;top:776.70px" width="36.00" height="36.00" viewBox="0 0 24 24"><path d="M20 12l-1.41-1.41L13 16.17V4h-2v12.17l-5.58-5.59L4 12l8 8 8-8z" fill="#000"/></svg>
<svg style="left:2107.80px;top:781.00px" width="36.00" height="36.00" viewBox="0 0 24 24"><path d="M6 19c0 1.1.9 2 2 2h8c1.1 0 2-.9 2-2V7H6v12zM19 4h-3.5l-1-1h-5l-1 1H5v2h14V4z" fill="#000"/></svg>
<svg style="left:2180.50px;top:780.00px" width="30.00" height="30.00" viewBox="0 0 24 24"><path d="M12 2C6.48 2 2 6.48 2 12s4.48 10 10 10 10-4.48 10-10S17.52 2 12 2zm-1 17.93c-3.95-.49-7-3.85-7-7.93 0-.62.08-1.21.21-1.79L9 15v1c0 1.1.9 2 2 2v1.93zm6.9-2.54c-.26-.81-1-1.39-1.9-1.39h-1v-3c0-.55-.45-1-1-1H8v-2h2c.55 0 1-.45 1-1V7h2c1.1 0 2-.9 2-2v-.41c2.93 1.19 5 4.06 5 7.41 0 2.08-.8 3.97-2.1 5.39z" fill="#c6c6c6"/></svg>
<svg style="left:840.00px;top:843.89px" width="36" height="23" viewBox="0 0 36 23">
<rect x="0.6" y="1.15" width="34.6" height="21" rx="2.6" fill="none" stroke="#000" stroke-width="2"/>
<path d="M4.9 17.7 V5.6 H8.3 L12 10.6 L15.7 5.6 H19.1 V17.7 H16 V10.4 L12 15.3 L8 10.4 V17.7 Z" fill="#000"/>
<path d="M25.3 5.7 H28.4 V11.8 H31.9 L26.85 17.6 L21.8 11.8 H25.3 Z" fill="#000"/>
</svg>
<svg style="left:1489.00px;top:837.74px" width="36.00" height="36.00" viewBox="0 0 24 24"><path d="M3.9 12c0-1.71 1.39-3.1 3.1-3.1h4V7H7c-2.76 0-5 2.24-5 5s2.24 5 5 5h4v-1.9H7c-1.71 0-3.1-1.39-3.1-3.1zM8 13h8v-2H8v2zm9-6h-4v1.9h4c1.71 0 3.1 1.39 3.1 3.1s-1.39 3.1-3.1 3.1h-4V17h4c2.76 0 5-2.24 5-5s-2.24-5-5-5z" fill="#000"/></svg>
<svg style="left:1562.00px;top:837.74px" width="36.00" height="36.00" viewBox="0 0 24 24"><path d="M20.54 5.23l-1.39-1.68C18.88 3.21 18.47 3 18 3H6c-.47 0-.88.21-1.16.55L3.46 5.23C3.17 5.57 3 6.02 3 6.5V19c0 1.1.9 2 2 2h14c1.1 0 2-.9 2-2V6.5c0-.48-.17-.93-.46-1.27zM12 17.5L6.5 12H10v-2h4v2h3.5L12 17.5zM5.12 5l.81-1h12l.94 1H5.12z" fill="#000"/></svg>
<svg style="left:1635.30px;top:837.74px" width="36.00" height="36.00" viewBox="0 0 24 24"><path d="M19.35 10.04C18.67 6.59 15.64 4 12 4 9.11 4 6.6 5.64 5.35 8.04 2.34 8.36 0 10.91 0 14c0 3.31 2.69 6 6 6h13c2.76 0 5-2.24 5-5 0-2.64-2.05-4.78-4.65-4.96zM10 17l-3.5-3.5 1.41-1.41L10 14.17 15.18 9l1.41 1.41L10 17z" fill="#000"/></svg>
<svg style="left:1708.40px;top:833.84px" width="36.00" height="36.00" viewBox="0 0 24 24"><path d="M4 12l1.41 1.41L11 7.83V20h2V7.83l5.58 5.59L20 12l-8-8-8 8z" fill="#000"/></svg>
<svg style="left:1751.30px;top:833.84px" width="36.00" height="36.00" viewBox="0 0 24 24"><path d="M20 12l-1.41-1.41L13 16.17V4h-2v12.17l-5.58-5.59L4 12l8 8 8-8z" fill="#000"/></svg>
<svg style="left:2107.80px;top:838.14px" width="36.00" height="36.00" viewBox="0 0 24 24"><path d="M6 19c0 1.1.9 2 2 2h8c1.1 0 2-.9 2-2V7H6v12zM19 4h-3.5l-1-1h-5l-1 1H5v2h14V4z" fill="#000"/></svg>
<svg style="left:2180.50px;top:837.14px" width="30.00" height="30.00" viewBox="0 0 24 24"><path d="M12 2C6.48 2 2 6.48 2 12s4.48 10 10 10 10-4.48 10-10S17.52 2 12 2zm-1 17.93c-3.95-.49-7-3.85-7-7.93 0-.62.08-1.21.21-1.79L9 15v1c0 1.1.9 2 2 2v1.93zm6.9-2.54c-.26-.81-1-1.39-1.9-1.39h-1v-3c0-.55-.45-1-1-1H8v-2h2c.55 0 1-.45 1-1V7h2c1.1 0 2-.9 2-2v-.41c2.93 1.19 5 4.06 5 7.41 0 2.08-.8 3.97-2.1 5.39z" fill="#c6c6c6"/></svg>
<svg style="left:840.00px;top:894.88px" width="36" height="36" viewBox="0 0 36 36">
<circle cx="18" cy="18" r="18" fill="#6c9b0c"/>
<g fill="none" stroke="#f4ffe6" stroke-width="2.3" stroke-linecap="round" stroke-linejoin="round">
<path d="M12.9 9.9 c-1.6 0 -2.6 0.6 -2.6 2.4 v3.2 c0 1.4 -0.9 2.3 -2.6 2.5 c1.7 0.2 2.6 1.1 2.6 2.5 v3.2 c0 1.8 1 2.4 2.6 2.4"/>
<path d="M23.1 9.9 c1.6 0 2.6 0.6 2.6 2.4 v3.2 c0 1.4 0.9 2.3 2.6 2.5 c-1.7 0.2 -2.6 1.1 -2.6 2.5 v3.2 c0 1.8 -1 2.4 -2.6 2.4"/>
</g>
<g fill="#f4ffe6"><circle cx="13.4" cy="18" r="1.5"/><circle cx="18" cy="18" r="1.5"/><circle cx="22.6" cy="18" r="1.5"/></g>
</svg>
<svg style="left:1489.00px;top:894.88px" width="36.00" height="36.00" viewBox="0 0 24 24"><path d="M3.9 12c0-1.71 1.39-3.1 3.1-3.1h4V7H7c-2.76 0-5 2.24-5 5s2.24 5 5 5h4v-1.9H7c-1.71 0-3.1-1.39-3.1-3.1zM8 13h8v-2H8v2zm9-6h-4v1.9h4c1.71 0 3.1 1.39 3.1 3.1s-1.39 3.1-3.1 3.1h-4V17h4c2.76 0 5-2.24 5-5s-2.24-5-5-5z" fill="#000"/></svg>
<svg style="left:1562.00px;top:894.88px" width="36.00" height="36.00" viewBox="0 0 24 24"><path d="M20.54 5.23l-1.39-1.68C18.88 3.21 18.47 3 18 3H6c-.47 0-.88.21-1.16.55L3.46 5.23C3.17 5.57 3 6.02 3 6.5V19c0 1.1.9 2 2 2h14c1.1 0 2-.9 2-2V6.5c0-.48-.17-.93-.46-1.27zM12 17.5L6.5 12H10v-2h4v2h3.5L12 17.5zM5.12 5l.81-1h12l.94 1H5.12z" fill="#000"/></svg>
<svg style="left:1635.30px;top:894.88px" width="36.00" height="36.00" viewBox="0 0 24 24"><path d="M19.35 10.04C18.67 6.59 15.64 4 12 4 9.11 4 6.6 5.64 5.35 8.04 2.34 8.36 0 10.91 0 14c0 3.31 2.69 6 6 6h13c2.76 0 5-2.24 5-5 0-2.64-2.05-4.78-4.65-4.96zM10 17l-3.5-3.5 1.41-1.41L10 14.17 15.18 9l1.41 1.41L10 17z" fill="#000"/></svg>
<svg style="left:1708.40px;top:890.98px" width="36.00" height="36.00" viewBox="0 0 24 24"><path d="M4 12l1.41 1.41L11 7.83V20h2V7.83l5.58 5.59L20 12l-8-8-8 8z" fill="#000"/></svg>
<svg style="left:1751.30px;top:890.98px" width="36.00" height="36.00" viewBox="0 0 24 24"><path d="M20 12l-1.41-1.41L13 16.17V4h-2v12.17l-5.58-5.59L4 12l8 8 8-8z" fill="#000"/></svg>
<svg style="left:2107.80px;top:895.28px" width="36.00" height="36.00" viewBox="0 0 24 24"><path d="M6 19c0 1.1.9 2 2 2h8c1.1 0 2-.9 2-2V7H6v12zM19 4h-3.5l-1-1h-5l-1 1H5v2h14V4z" fill="#000"/></svg>
<svg style="left:2180.50px;top:894.28px" width="30.00" height="30.00" viewBox="0 0 24 24"><path d="M12 2C6.48 2 2 6.48 2 12s4.48 10 10 10 10-4.48 10-10S17.52 2 12 2zm-1 17.93c-3.95-.49-7-3.85-7-7.93 0-.62.08-1.21.21-1.79L9 15v1c0 1.1.9 2 2 2v1.93zm6.9-2.54c-.26-.81-1-1.39-1.9-1.39h-1v-3c0-.55-.45-1-1-1H8v-2h2c.55 0 1-.45 1-1V7h2c1.1 0 2-.9 2-2v-.41c2.93 1.19 5 4.06 5 7.41 0 2.08-.8 3.97-2.1 5.39z" fill="#c6c6c6"/></svg>
<svg style="left:840.00px;top:952.32px" width="36" height="36" viewBox="0 0 36 36">
<rect width="36" height="36" rx="8" fill="#e40046"/>
<g fill="none" stroke="#fff" stroke-width="1.5" stroke-linecap="round">
<path d="M14.1 18.9 L19 7.6 L27.9 29.2"/>
<path d="M8.1 18.9 H18.2 M6.4 22.6 H16.3 M12.2 22.6 L9.4 29.2" stroke-width="1.7"/>
</g>
</svg>
<svg style="left:1489.00px;top:952.02px" width="36.00" height="36.00" viewBox="0 0 24 24"><path d="M3.9 12c0-1.71 1.39-3.1 3.1-3.1h4V7H7c-2.76 0-5 2.24-5 5s2.24 5 5 5h4v-1.9H7c-1.71 0-3.1-1.39-3.1-3.1zM8 13h8v-2H8v2zm9-6h-4v1.9h4c1.71 0 3.1 1.39 3.1 3.1s-1.39 3.1-3.1 3.1h-4V17h4c2.76 0 5-2.24 5-5s-2.24-5-5-5z" fill="#000"/></svg>
<svg style="left:1562.00px;top:952.02px" width="36.00" height="36.00" viewBox="0 0 24 24"><path d="M20.54 5.23l-1.39-1.68C18.88 3.21 18.47 3 18 3H6c-.47 0-.88.21-1.16.55L3.46 5.23C3.17 5.57 3 6.02 3 6.5V19c0 1.1.9 2 2 2h14c1.1 0 2-.9 2-2V6.5c0-.48-.17-.93-.46-1.27zM12 17.5L6.5 12H10v-2h4v2h3.5L12 17.5zM5.12 5l.81-1h12l.94 1H5.12z" fill="#000"/></svg>
<svg style="left:1635.30px;top:952.02px" width="36.00" height="36.00" viewBox="0 0 24 24"><path d="M19.35 10.04C18.67 6.59 15.64 4 12 4 9.11 4 6.6 5.64 5.35 8.04 2.34 8.36 0 10.91 0 14c0 3.31 2.69 6 6 6h13c2.76 0 5-2.24 5-5 0-2.64-2.05-4.78-4.65-4.96zM10 17l-3.5-3.5 1.41-1.41L10 14.17 15.18 9l1.41 1.41L10 17z" fill="#000"/></svg>
<svg style="left:1708.40px;top:948.12px" width="36.00" height="36.00" viewBox="0 0 24 24"><path d="M4 12l1.41 1.41L11 7.83V20h2V7.83l5.58 5.59L20 12l-8-8-8 8z" fill="#000"/></svg>
<svg style="left:1751.30px;top:948.12px" width="36.00" height="36.00" viewBox="0 0 24 24"><path d="M20 12l-1.41-1.41L13 16.17V4h-2v12.17l-5.58-5.59L4 12l8 8 8-8z" fill="#000"/></svg>
<svg style="left:2107.80px;top:952.42px" width="36.00" height="36.00" viewBox="0 0 24 24"><path d="M6 19c0 1.1.9 2 2 2h8c1.1 0 2-.9 2-2V7H6v12zM19 4h-3.5l-1-1h-5l-1 1H5v2h14V4z" fill="#000"/></svg>
<svg style="left:840.00px;top:1015.31px" width="36" height="23" viewBox="0 0 36 23">
<rect x="0.6" y="1.15" width="34.6" height="21" rx="2.6" fill="none" stroke="#000" stroke-width="2"/>
<path d="M4.9 17.7 V5.6 H8.3 L12 10.6 L15.7 5.6 H19.1 V17.7 H16 V10.4 L12 15.3 L8 10.4 V17.7 Z" fill="#000"/>
<path d="M25.3 5.7 H28.4 V11.8 H31.9 L26.85 17.6 L21.8 11.8 H25.3 Z" fill="#000"/>
</svg>
<svg style="left:1489.00px;top:1009.16px" width="36.00" height="36.00" viewBox="0 0 24 24"><path d="M3.9 12c0-1.71 1.39-3.1 3.1-3.1h4V7H7c-2.76 0-5 2.24-5 5s2.24 5 5 5h4v-1.9H7c-1.71 0-3.1-1.39-3.1-3.1zM8 13h8v-2H8v2zm9-6h-4v1.9h4c1.71 0 3.1 1.39 3.1 3.1s-1.39 3.1-3.1 3.1h-4V17h4c2.76 0 5-2.24 5-5s-2.24-5-5-5z" fill="#000"/></svg>
<svg style="left:1562.00px;top:1009.16px" width="36.00" height="36.00" viewBox="0 0 24 24"><path d="M20.54 5.23l-1.39-1.68C18.88 3.21 18.47 3 18 3H6c-.47 0-.88.21-1.16.55L3.46 5.23C3.17 5.57 3 6.02 3 6.5V19c0 1.1.9 2 2 2h14c1.1 0 2-.9 2-2V6.5c0-.48-.17-.93-.46-1.27zM12 17.5L6.5 12H10v-2h4v2h3.5L12 17.5zM5.12 5l.81-1h12l.94 1H5.12z" fill="#000"/></svg>
<svg style="left:1635.30px;top:1009.16px" width="36.00" height="36.00" viewBox="0 0 24 24"><path d="M19.35 10.04C18.67 6.59 15.64 4 12 4 9.11 4 6.6 5.64 5.35 8.04 2.34 8.36 0 10.91 0 14c0 3.31 2.69 6 6 6h13c2.76 0 5-2.24 5-5 0-2.64-2.05-4.78-4.65-4.96zM10 17l-3.5-3.5 1.41-1.41L10 14.17 15.18 9l1.41 1.41L10 17z" fill="#000"/></svg>
<svg style="left:1708.40px;top:1005.26px" width="36.00" height="36.00" viewBox="0 0 24 24"><path d="M4 12l1.41 1.41L11 7.83V20h2V7.83l5.58 5.59L20 12l-8-8-8 8z" fill="#000"/></svg>
<svg style="left:1751.30px;top:1005.26px" width="36.00" height="36.00" viewBox="0 0 24 24"><path d="M20 12l-1.41-1.41L13 16.17V4h-2v12.17l-5.58-5.59L4 12l8 8 8-8z" fill="#000"/></svg>
<svg style="left:2107.80px;top:1009.56px" width="36.00" height="36.00" viewBox="0 0 24 24"><path d="M6 19c0 1.1.9 2 2 2h8c1.1 0 2-.9 2-2V7H6v12zM19 4h-3.5l-1-1h-5l-1 1H5v2h14V4z" fill="#000"/></svg>
<svg style="left:2180.50px;top:1008.56px" width="30.00" height="30.00" viewBox="0 0 24 24"><path d="M12 2C6.48 2 2 6.48 2 12s4.48 10 10 10 10-4.48 10-10S17.52 2 12 2zm-1 17.93c-3.95-.49-7-3.85-7-7.93 0-.62.08-1.21.21-1.79L9 15v1c0 1.1.9 2 2 2v1.93zm6.9-2.54c-.26-.81-1-1.39-1.9-1.39h-1v-3c0-.55-.45-1-1-1H8v-2h2c.55 0 1-.45 1-1V7h2c1.1 0 2-.9 2-2v-.41c2.93 1.19 5 4.06 5 7.41 0 2.08-.8 3.97-2.1 5.39z" fill="#c6c6c6"/></svg>
<svg style="left:840.00px;top:1066.60px" width="36" height="36" viewBox="0 0 36 36">
<rect width="36" height="36" rx="8" fill="#e40046"/>
<g fill="none" stroke="#fff" stroke-width="1.5" stroke-linecap="round">
<path d="M14.1 18.9 L19 7.6 L27.9 29.2"/>
<path d="M8.1 18.9 H18.2 M6.4 22.6 H16.3 M12.2 22.6 L9.4 29.2" stroke-width="1.7"/>
</g>
</svg>
<svg style="left:1489.00px;top:1066.30px" width="36.00" height="36.00" viewBox="0 0 24 24"><path d="M3.9 12c0-1.71 1.39-3.1 3.1-3.1h4V7H7c-2.76 0-5 2.24-5 5s2.24 5 5 5h4v-1.9H7c-1.71 0-3.1-1.39-3.1-3.1zM8 13h8v-2H8v2zm9-6h-4v1.9h4c1.71 0 3.1 1.39 3.1 3.1s-1.39 3.1-3.1 3.1h-4V17h4c2.76 0 5-2.24 5-5s-2.24-5-5-5z" fill="#000"/></svg>
<svg style="left:1562.00px;top:1066.30px" width="36.00" height="36.00" viewBox="0 0 24 24"><path d="M20.54 5.23l-1.39-1.68C18.88 3.21 18.47 3 18 3H6c-.47 0-.88.21-1.16.55L3.46 5.23C3.17 5.57 3 6.02 3 6.5V19c0 1.1.9 2 2 2h14c1.1 0 2-.9 2-2V6.5c0-.48-.17-.93-.46-1.27zM12 17.5L6.5 12H10v-2h4v2h3.5L12 17.5zM5.12 5l.81-1h12l.94 1H5.12z" fill="#000"/></svg>
<svg style="left:1635.30px;top:1066.30px" width="36.00" height="36.00" viewBox="0 0 24 24"><path d="M19.35 10.04C18.67 6.59 15.64 4 12 4 9.11 4 6.6 5.64 5.35 8.04 2.34 8.36 0 10.91 0 14c0 3.31 2.69 6 6 6h13c2.76 0 5-2.24 5-5 0-2.64-2.05-4.78-4.65-4.96zM10 17l-3.5-3.5 1.41-1.41L10 14.17 15.18 9l1.41 1.41L10 17z" fill="#000"/></svg>
<svg style="left:1708.40px;top:1062.40px" width="36.00" height="36.00" viewBox="0 0 24 24"><path d="M4 12l1.41 1.41L11 7.83V20h2V7.83l5.58 5.59L20 12l-8-8-8 8z" fill="#000"/></svg>
<svg style="left:1751.30px;top:1062.40px" width="36.00" height="36.00" viewBox="0 0 24 24"><path d="M20 12l-1.41-1.41L13 16.17V4h-2v12.17l-5.58-5.59L4 12l8 8 8-8z" fill="#000"/></svg>
<svg style="left:2107.80px;top:1066.70px" width="36.00" height="36.00" viewBox="0 0 24 24"><path d="M6 19c0 1.1.9 2 2 2h8c1.1 0 2-.9 2-2V7H6v12zM19 4h-3.5l-1-1h-5l-1 1H5v2h14V4z" fill="#000"/></svg>
<svg style="left:840.00px;top:1129.59px" width="36" height="23" viewBox="0 0 36 23">
<rect x="0.6" y="1.15" width="34.6" height="21" rx="2.6" fill="none" stroke="#000" stroke-width="2"/>
<path d="M4.9 17.7 V5.6 H8.3 L12 10.6 L15.7 5.6 H19.1 V17.7 H16 V10.4 L12 15.3 L8 10.4 V17.7 Z" fill="#000"/>
<path d="M25.3 5.7 H28.4 V11.8 H31.9 L26.85 17.6 L21.8 11.8 H25.3 Z" fill="#000"/>
</svg>
<svg style="left:1489.00px;top:1123.44px" width="36.00" height="36.00" viewBox="0 0 24 24"><path d="M3.9 12c0-1.71 1.39-3.1 3.1-3.1h4V7H7c-2.76 0-5 2.24-5 5s2.24 5 5 5h4v-1.9H7c-1.71 0-3.1-1.39-3.1-3.1zM8 13h8v-2H8v2zm9-6h-4v1.9h4c1.71 0 3.1 1.39 3.1 3.1s-1.39 3.1-3.1 3.1h-4V17h4c2.76 0 5-2.24 5-5s-2.24-5-5-5z" fill="#000"/></svg>
<svg style="left:1562.00px;top:1123.44px" width="36.00" height="36.00" viewBox="0 0 24 24"><path d="M20.54 5.23l-1.39-1.68C18.88 3.21 18.47 3 18 3H6c-.47 0-.88.21-1.16.55L3.46 5.23C3.17 5.57 3 6.02 3 6.5V19c0 1.1.9 2 2 2h14c1.1 0 2-.9 2-2V6.5c0-.48-.17-.93-.46-1.27zM12 17.5L6.5 12H10v-2h4v2h3.5L12 17.5zM5.12 5l.81-1h12l.94 1H5.12z" fill="#000"/></svg>
<svg style="left:1635.30px;top:1123.44px" width="36.00" height="36.00" viewBox="0 0 24 24"><path d="M19.35 10.04C18.67 6.59 15.64 4 12 4 9.11 4 6.6 5.64 5.35 8.04 2.34 8.36 0 10.91 0 14c0 3.31 2.69 6 6 6h13c2.76 0 5-2.24 5-5 0-2.64-2.05-4.78-4.65-4.96zM19 18H6c-2.21 0-4-1.79-4-4s1.79-4 4-4h.71C7.37 7.69 9.48 6 12 6c3.04 0 5.5 2.46 5.5 5.5v.5H19c1.66 0 3 1.34 3 3s-1.34 3-3 3z" fill="#000"/></svg>
<svg style="left:1708.40px;top:1119.54px" width="36.00" height="36.00" viewBox="0 0 24 24"><path d="M4 12l1.41 1.41L11 7.83V20h2V7.83l5.58 5.59L20 12l-8-8-8 8z" fill="#000"/></svg>
<svg style="left:1751.30px;top:1119.54px" width="36.00" height="36.00" viewBox="0 0 24 24"><path d="M20 12l-1.41-1.41L13 16.17V4h-2v12.17l-5.58-5.59L4 12l8 8 8-8z" fill="#000"/></svg>
<svg style="left:2107.80px;top:1123.84px" width="36.00" height="36.00" viewBox="0 0 24 24"><path d="M6 19c0 1.1.9 2 2 2h8c1.1 0 2-.9 2-2V7H6v12zM19 4h-3.5l-1-1h-5l-1 1H5v2h14V4z" fill="#000"/></svg>
<svg style="left:2180.50px;top:1122.84px" width="30.00" height="30.00" viewBox="0 0 24 24"><path d="M12 2C6.48 2 2 6.48 2 12s4.48 10 10 10 10-4.48 10-10S17.52 2 12 2zm-1 17.93c-3.95-.49-7-3.85-7-7.93 0-.62.08-1.21.21-1.79L9 15v1c0 1.1.9 2 2 2v1.93zm6.9-2.54c-.26-.81-1-1.39-1.9-1.39h-1v-3c0-.55-.45-1-1-1H8v-2h2c.55 0 1-.45 1-1V7h2c1.1 0 2-.9 2-2v-.41c2.93 1.19 5 4.06 5 7.41 0 2.08-.8 3.97-2.1 5.39z" fill="#c6c6c6"/></svg>
<div class=t id=tx0 style="left:179.82px;top:40.48px;font-size:20.7px;color:#fff;font-weight:700;letter-spacing:0.160px;">API Management</div>
<div class=t id=tx1 style="left:396.05px;top:40.98px;font-size:20.7px;color:#fff;font-weight:700;letter-spacing:0.316px;">Developers Portal</div>
<div class=t id=tx2 style="left:2188.20px;top:24.31px;font-size:17px;color:#111;font-weight:700;">5</div>
<div class=t id=tx3 style="left:48.19px;top:147.50px;font-size:15px;color:#d9d9e4;letter-spacing:0.528px;">Environment</div>
<div class=t id=tx4 style="left:49.19px;top:175.27px;font-size:20px;color:#9b9cb1;letter-spacing:0.770px;">fr-apim-master-dev</div>
<div class=t id=tx5 style="left:97.18px;top:253.48px;font-size:20.7px;color:#fff;letter-spacing:0.614px;">Dashboard</div>
<div class=t id=tx6 style="left:98.67px;top:314.33px;font-size:20.7px;color:#fff;letter-spacing:0.709px;">APIs</div>
<div class=t id=tx7 style="left:98.67px;top:375.18px;font-size:20.7px;color:#fff;letter-spacing:1.282px;">Applications</div>
<div class=t id=tx8 style="left:97.90px;top:436.03px;font-size:20.7px;color:#fff;letter-spacing:0.600px;">Gateways</div>
<div class=t id=tx9 style="left:98.67px;top:496.88px;font-size:20.7px;color:#fff;letter-spacing:1.205px;">Audit</div>
<div class=t id=tx10 style="left:97.18px;top:557.73px;font-size:20.7px;color:#fff;letter-spacing:0.748px;">Messages</div>
<div class=t id=tx11 style="left:98.67px;top:618.58px;font-size:20.7px;color:#fff;letter-spacing:1.407px;">Analytics</div>
<div class=t id=tx12 style="left:98.67px;top:679.43px;font-size:20.7px;color:#fff;letter-spacing:1.430px;">Alerts</div>
<div class=t id=tx13 style="left:97.63px;top:740.28px;font-size:20.7px;color:#fff;letter-spacing:1.332px;">Settings</div>
<div class=t id=tx14 style="left:97.95px;top:978.18px;font-size:20.7px;color:#fff;letter-spacing:1.007px;">Organization</div>
<div class=t id=tx15 style="left:98.90px;top:1094.98px;font-size:20.7px;color:#fff;letter-spacing:0.866px;">Collapse menu</div>
<div class=t id=tx16 style="left:383.82px;top:159.48px;font-size:20.7px;color:#9393a8;letter-spacing:1.459px;">Portal</div>
<div class=t id=tx17 style="left:397.23px;top:216.68px;font-size:20.7px;color:#fff;letter-spacing:1.337px;">Analytics</div>
<div class=t id=tx18 style="left:397.23px;top:274.58px;font-size:20.7px;color:#fff;letter-spacing:1.130px;">API Portal Information</div>
<div class=t id=tx19 style="left:397.23px;top:332.48px;font-size:20.7px;color:#fff;letter-spacing:0.886px;">API Quality</div>
<div class=t id=tx20 style="left:397.23px;top:390.38px;font-size:20.7px;color:#fff;letter-spacing:1.340px;">Authentication</div>
<div class=t id=tx21 style="left:396.38px;top:448.28px;font-size:20.7px;color:#fff;letter-spacing:0.875px;">Categories</div>
<div class=t id=tx22 style="left:396.38px;top:506.18px;font-size:20.7px;color:#fff;letter-spacing:1.132px;">Client Registration</div>
<div class=t id=tx23 style="left:395.82px;top:564.08px;font-size:20.7px;color:#fff;letter-spacing:1.056px;">Documentation</div>
<div class=t id=tx24 style="left:395.82px;top:621.98px;font-size:20.7px;color:#fff;letter-spacing:0.922px;">Metadata</div>
<div class=t id=tx25 style="left:396.02px;top:679.88px;font-size:20.7px;color:#fff;letter-spacing:1.361px;">Settings</div>
<div class=t id=tx26 style="left:397.02px;top:737.78px;font-size:20.7px;color:#fff;letter-spacing:0.258px;">Theme</div>
<div class=t id=tx27 style="left:397.02px;top:795.68px;font-size:20.7px;color:#fff;letter-spacing:0.803px;">Top APIs</div>
<div class=t id=tx28 style="left:384.38px;top:865.78px;font-size:20.7px;color:#9393a8;letter-spacing:0.425px;">Gateway</div>
<div class=t id=tx29 style="left:397.23px;top:923.68px;font-size:20.7px;color:#fff;letter-spacing:0.890px;">API Logging</div>
<div class=t id=tx30 style="left:395.82px;top:981.58px;font-size:20.7px;color:#fff;letter-spacing:1.218px;">Dictionaries</div>
<div class=t id=tx31 style="left:396.02px;top:1039.48px;font-size:20.7px;color:#fff;letter-spacing:0.949px;">Sharding Tags</div>
<div class=t id=tx32 style="left:397.02px;top:1097.38px;font-size:20.7px;color:#fff;letter-spacing:0.801px;">Tenants</div>
<div class=t id=tx33 style="left:1883.09px;top:173.98px;font-size:20.7px;color:#1b5e62;letter-spacing:1.471px;">Import multiple files</div>
<div class=t id=tx34 style="left:2121.65px;top:176.99px;font-size:19.5px;color:#fff;font-weight:700;letter-spacing:0.161px;">FETCH ALL</div>
<div class=t id=tx35 style="left:839.88px;top:283.10px;font-size:17.6px;color:#737373;font-weight:700;letter-spacing:0.101px;">Name</div>
<div class=t id=tx36 style="left:1824.33px;top:283.10px;font-size:17.6px;color:#737373;font-weight:700;letter-spacing:0.297px;">Last Update</div>
<div class=t id=tx37 style="left:899.90px;top:349.99px;font-size:19.5px;color:#0f5458;letter-spacing:0.234px;">Header</div>
<div class=t id=tx38 style="left:901.00px;top:400.09px;font-size:19.5px;color:#0f5458;letter-spacing:0.615px;">TopFooter</div>
<div class=t id=tx39 style="left:899.90px;top:450.29px;font-size:19.5px;color:#0f5458;letter-spacing:0.694px;">Footer</div>
<div class=t id=tx40 style="left:899.90px;top:503.99px;font-size:19.5px;color:#0f5458;letter-spacing:0.895px;">Right toc menu</div>
<div class=t id=tx41 style="left:1823.90px;top:504.09px;font-size:19.5px;color:#1d1d1d;letter-spacing:0.525px;">Dec 27, 2021 8:10:12 AM</div>
<div class=t id=tx42 style="left:901.21px;top:561.13px;font-size:19.5px;color:#0f5458;letter-spacing:0.577px;">Aside</div>
<div class=t id=tx43 style="left:1823.90px;top:561.23px;font-size:19.5px;color:#1d1d1d;letter-spacing:0.525px;">Dec 27, 2021 3:21:07 AM</div>
<div class=t id=tx44 style="left:900.24px;top:618.27px;font-size:19.5px;color:#0f5458;letter-spacing:0.581px;">bbbb</div>
<div class=t id=tx45 style="left:1823.90px;top:618.37px;font-size:19.5px;color:#1d1d1d;letter-spacing:0.525px;">Dec 27, 2021 8:10:30 AM</div>
<div class=t id=tx46 style="left:900.65px;top:675.41px;font-size:19.5px;color:#0f5458;letter-spacing:-1.362px;">aaa</div>
<div class=t id=tx47 style="left:1823.90px;top:675.51px;font-size:19.5px;color:#1d1d1d;letter-spacing:0.525px;">Dec 27, 2021 7:16:40 AM</div>
<div class=t id=tx48 style="left:901.14px;top:732.55px;font-size:19.5px;color:#0f5458;letter-spacing:2.237px;">tttt</div>
<div class=t id=tx49 style="left:1823.90px;top:732.65px;font-size:19.5px;color:#1d1d1d;letter-spacing:0.525px;">Dec 27, 2021 7:17:03 AM</div>
<div class=t id=tx50 style="left:900.51px;top:789.69px;font-size:19.5px;color:#0f5458;letter-spacing:0.737px;">openapi.yaml</div>
<div class=t id=tx51 style="left:1823.90px;top:789.79px;font-size:19.5px;color:#1d1d1d;letter-spacing:0.525px;">Dec 27, 2021 7:21:06 AM</div>
<div class=t id=tx52 style="left:901.00px;top:846.83px;font-size:19.5px;color:#0f5458;letter-spacing:1.052px;">Test Markdown with links</div>
<div class=t id=tx53 style="left:1824.77px;top:846.93px;font-size:19.5px;color:#1d1d1d;letter-spacing:0.667px;">Jan 21, 2022 3:54:34 AM</div>
<div class=t id=tx54 style="left:900.22px;top:903.97px;font-size:19.5px;color:#0f5458;letter-spacing:0.796px;">Swagger Petstore</div>
<div class=t id=tx55 style="left:1823.90px;top:904.07px;font-size:19.5px;color:#1d1d1d;letter-spacing:0.676px;">Mar 24, 2022 10:55:21 AM</div>
<div class=t id=tx56 style="left:901.00px;top:961.11px;font-size:19.5px;color:#0f5458;letter-spacing:1.158px;">Test Ascii</div>
<div class=t id=tx57 style="left:1824.77px;top:961.21px;font-size:19.5px;color:#1d1d1d;letter-spacing:0.658px;">Jan 18, 2022 5:37:43 AM</div>
<div class=t id=tx58 style="left:899.90px;top:1018.25px;font-size:19.5px;color:#0f5458;letter-spacing:0.808px;">MD Table of content</div>
<div class=t id=tx59 style="left:1824.77px;top:1018.35px;font-size:19.5px;color:#1d1d1d;letter-spacing:0.669px;">Jan 21, 2022 6:03:55 AM</div>
<div class=t id=tx60 style="left:900.65px;top:1075.39px;font-size:19.5px;color:#0f5458;letter-spacing:1.189px;">asciidoctor-highlight</div>
<div class=t id=tx61 style="left:1823.90px;top:1075.49px;font-size:19.5px;color:#1d1d1d;letter-spacing:0.691px;">Mar 24, 2022 8:55:31 AM</div>
<div class=t id=tx62 style="left:900.86px;top:1132.53px;font-size:19.5px;color:#767676;font-style:italic;letter-spacing:0.757px;">onlineTest</div>
<div class=t id=tx63 style="left:1824.77px;top:1132.63px;font-size:19.5px;color:#1d1d1d;letter-spacing:0.571px;">Jun 7, 2023 3:55:00 PM</div>
<div class=a style="left:746px;top:1088px;width:1558px;height:74px;background:linear-gradient(rgba(0,0,0,0) 0%,rgba(0,0,0,0.012) 30%,rgba(0,0,0,0.045) 60%,rgba(0,0,0,0.125) 100%)"></div>
<div class=a style="left:2176px;top:1037px;width:85px;height:85px;border-radius:50%;background:#1c1e3e;box-shadow:0 4px 8px rgba(0,0,0,0.25)"></div>
<svg style="left:2176px;top:1037px" width="85" height="85" viewBox="0 0 85 85"><path d="M42.5 31.7 V53.3 M31.7 42.5 H53.3" stroke="#fff" stroke-width="3.6"/></svg>
<div class=a style="left:2098px;top:149px;width:147px;height:74.5px;border:3.2px solid #ee2a0e"></div>
<div class=a style="left:0;top:0;width:1px;height:1150px;background:#30324c"></div>
<div class=a style="left:2303px;top:0;width:1px;height:102px;background:#30324c"></div>
<svg style="left:0;top:1148px" width="14" height="14" viewBox="0 0 14 14"><path d="M0 0 A14 14 0 0 0 14 14 H0 Z" fill="#000"/></svg>
<svg style="left:2290px;top:1148px" width="14" height="14" viewBox="0 0 14 14"><path d="M14 0 A14 14 0 0 1 0 14 H14 Z" fill="#0b2131"/></svg>
</body></html>
